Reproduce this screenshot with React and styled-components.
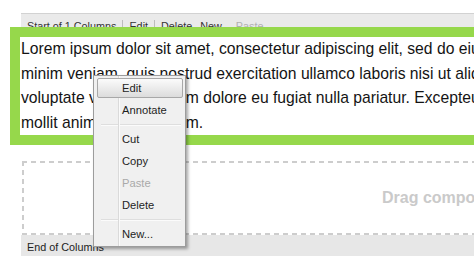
import React from "react";
import styled, { createGlobalStyle } from "styled-components";

const Global = createGlobalStyle`
  html, body { margin: 0; padding: 0; background: #fff; overflow: hidden; }
  body { font-family: "Liberation Sans", Arial, sans-serif; }
`;

const Page = styled.div`
  position: relative;
  width: 474px;
  height: 256px;
  overflow: hidden;
  background: #fff;
`;

const Column = styled.div`
  padding: 13px 0 0 21px;
  width: 900px;
  display: flex;
  flex-direction: column;
`;

const Bar = styled.div`
  display: flex;
  align-items: center;
  box-sizing: border-box;
  height: 22px;
  padding: ${(p) => (p.$bottom ? "0 0 0 6px" : "2px 0 0 6px")};
  background: ${(p) => (p.$bottom ? "#e7e7e7" : "#eaeaea")};
  border-top: 1px solid ${(p) => (p.$bottom ? "#e7e7e7" : "#d2d2d2")};
  font-size: 10.8px;
  color: #222;
`;

const BarItem = styled.span`
  color: ${(p) => (p.$disabled ? "#b0b0b0" : "#333")};
  margin-right: ${(p) => p.$mr || 0}px;
`;

const BarSep = styled.span`
  width: 1px;
  height: 12px;
  background: #bcbcbc;
  margin: 0 6px;
`;

const Selected = styled.div`
  position: relative;
  z-index: 1;
  margin: -8px 0 0 -11px;
  border: 10px solid #96d84b;
  background: #fff;
  padding-left: 1px;
  font-size: 15.7px;
  line-height: 24.5px;
  color: #141414;
`;

const Line = styled.div`
  white-space: nowrap;
`;

const Dropzone = styled.div`
  margin-top: 16px;
  margin-left: 1px;
  height: 74px;
  display: flex;
  align-items: center;
  padding-left: 360px;
  font-size: 16px;
  font-weight: bold;
  color: #cacaca;
  background-image:
    repeating-linear-gradient(90deg, #cdcdcd 0 5px, transparent 5px 9px),
    repeating-linear-gradient(90deg, #cdcdcd 0 5px, transparent 5px 9px),
    repeating-linear-gradient(180deg, #cdcdcd 0 5px, transparent 5px 9px);
  background-size: 100% 2px, 100% 2px, 2px 100%;
  background-position: 0 0, 0 100%, 0 0;
  background-repeat: no-repeat;
`;

const Menu = styled.div`
  position: absolute;
  z-index: 5;
  left: 93px;
  top: 75px;
  width: 91px;
  padding: 1px 0;
  background: #f0f0f0;
  border: 1px solid #9c9c9c;
  box-shadow: 2px 2px 3px rgba(0, 0, 0, 0.35);
  font-size: 11.2px;
  color: #1e1e1e;
  &::before {
    content: "";
    position: absolute;
    left: 24px;
    top: 0;
    bottom: 0;
    width: 1px;
    background: #dadada;
    box-shadow: 1px 0 0 #fafafa;
  }
`;

const Item = styled.div`
  position: relative;
  height: 22px;
  display: flex;
  align-items: center;
  padding-left: 28px;
  color: ${(p) => (p.$disabled ? "#a9a9a9" : "#1e1e1e")};
  ${(p) =>
    p.$active &&
    `
    &::before {
      content: "";
      position: absolute;
      left: 3px; right: 2px; top: 1px; bottom: 1px;
      border: 1px solid #a8a8a8;
      border-radius: 2px;
      background: linear-gradient(#fbfbfb, #dcdcdc);
      z-index: 0;
    }
  `}
  & > span { position: relative; z-index: 1; }
`;

const Separator = styled.div`
  height: 7px;
  display: flex;
  align-items: center;
  padding: 0 4px 0 7px;
  &::after {
    content: "";
    flex: 1;
    height: 1px;
    background: #dedede;
    box-shadow: 0 1px 0 #fbfbfb;
  }
`;

export default function App() {
  return (
    <Page>
      <Global />
      <Column>
        <Bar>
          <BarItem>Start of 1 Columns</BarItem>
          <BarSep />
          <BarItem>Edit</BarItem>
          <BarSep />
          <BarItem $mr={8}>Delete</BarItem>
          <BarItem $mr={14}>New</BarItem>
          <BarItem $disabled>Paste</BarItem>
        </Bar>
        <Selected>
          <Line>Lorem ipsum dolor sit amet, consectetur adipiscing elit, sed do eiusmod tempor incididunt ut labore et dolore magna aliqua. Ut enim ad</Line>
          <Line>minim veniam, quis nostrud exercitation ullamco laboris nisi ut aliquip ex ea commodo consequat. Duis aute irure dolor in reprehenderit in</Line>
          <Line>voluptate velit esse cillum dolore eu fugiat nulla pariatur. Excepteur sint occaecat cupidatat non proident, sunt in culpa qui officia deserunt</Line>
          <Line>mollit anim id est laborum.</Line>
        </Selected>
        <Dropzone>Drag components here</Dropzone>
        <Bar $bottom>End of Columns</Bar>
      </Column>
      <Menu>
        <Item $active><span>Edit</span></Item>
        <Item><span>Annotate</span></Item>
        <Separator />
        <Item><span>Cut</span></Item>
        <Item><span>Copy</span></Item>
        <Item $disabled><span>Paste</span></Item>
        <Item><span>Delete</span></Item>
        <Separator />
        <Item><span>New...</span></Item>
      </Menu>
    </Page>
  );
}
